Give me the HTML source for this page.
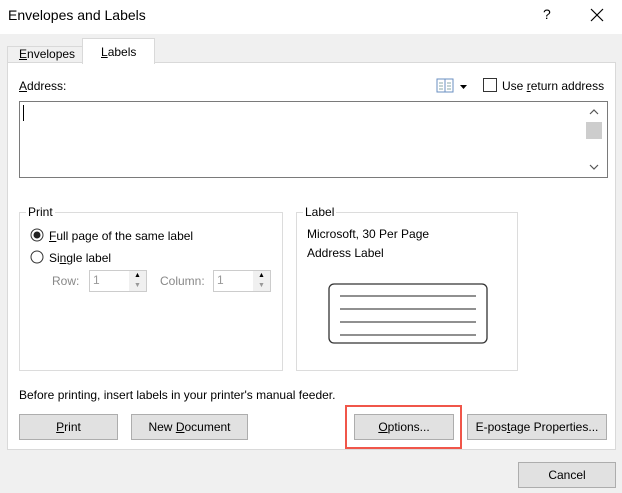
<!DOCTYPE html>
<html><head><style>
*{box-sizing:border-box;margin:0;padding:0}
body{width:622px;height:493px;background:#f0f0f0;font-family:"Liberation Sans",sans-serif;font-size:12px;color:#000;position:relative;overflow:hidden}
.a{position:absolute}
.btn{position:absolute;background:#e1e1e1;border:1px solid #adadad;text-align:center;line-height:24px;font-size:12px}
u{text-decoration:underline}
.grp{position:absolute;border:1px solid #dcdcdc}
.grp .t{position:absolute;top:-8px;left:6px;background:#fff;padding:0 2px}
</style></head><body>
<div class="a" style="left:0;top:0;width:622px;height:34px;background:#fff"></div>
<div class="a" style="left:8px;top:7px;font-size:14px">Envelopes and Labels</div>
<div class="a" style="left:543px;top:6px;font-size:14px">?</div>
<svg class="a" style="left:590px;top:8px" width="14" height="14"><path d="M1 1L13 13M13 1L1 13" stroke="#000" stroke-width="1.2"/></svg>
<div class="a" style="left:7px;top:46px;width:76px;height:17px;border:1px solid #d9d9d9;border-bottom:none;background:#f0f0f0"></div>
<div class="a" style="left:19px;top:47px"><u>E</u>nvelopes</div>
<div class="a" style="left:82px;top:38px;width:73px;height:26px;border:1px solid #d9d9d9;border-bottom:none;background:#fff;z-index:2"></div>
<div class="a" style="left:101px;top:45px;z-index:3"><u>L</u>abels</div>
<div class="a" style="left:7px;top:62px;width:609px;height:388px;background:#fff;border:1px solid #d9d9d9"></div>
<div class="a" style="left:19px;top:79px"><u>A</u>ddress:</div>
<svg class="a" style="left:436px;top:78px" width="36" height="16"><rect x="1" y="1" width="16" height="13" fill="#fff" stroke="#6a8fc2"/><line x1="9" y1="1" x2="9" y2="14" stroke="#6a8fc2"/><path d="M3 5h4M3 8h4M3 11h4M11 5h4M11 8h4M11 11h4" stroke="#8aa"/><path d="M24 7h7l-3.5 4z" fill="#000"/></svg>
<div class="a" style="left:483px;top:78px;width:14px;height:14px;border:1px solid #333;background:#fff"></div>
<div class="a" style="left:502px;top:79px">Use <u>r</u>eturn address</div>
<div class="a" style="left:19px;top:101px;width:589px;height:77px;border:1px solid #7a7a7a;background:#fff"></div>
<div class="a" style="left:23px;top:105px;width:1px;height:16px;background:#000"></div>
<div class="a" style="left:586px;top:122px;width:16px;height:17px;background:#cdcdcd"></div>
<svg class="a" style="left:589px;top:129px;top:129px" width="1" height="1"></svg>
<svg class="a" style="left:589px;top:130px" width="1" height="1"></svg>
<svg class="a" style="left:589px;top:129px" width="1" height="1"></svg>
<svg class="a" style="left:589px;top:129px" width="1" height="1"></svg>
<svg class="a" style="left:589px;top:129px" width="1" height="1"></svg>
<svg class="a" style="left:589px;top:108px" width="10" height="8"><path d="M1 6L5 2L9 6" fill="none" stroke="#555" stroke-width="1.2"/></svg>
<svg class="a" style="left:589px;top:163px" width="10" height="8"><path d="M1 2L5 6L9 2" fill="none" stroke="#555" stroke-width="1.2"/></svg>
<div class="grp" style="left:19px;top:212px;width:264px;height:159px"><span class="t">Print</span></div>
<svg class="a" style="left:30px;top:228px" width="14" height="14"><circle cx="7" cy="7" r="6" fill="#fff" stroke="#333"/><circle cx="7" cy="7" r="3.5" fill="#222"/></svg>
<div class="a" style="left:49px;top:229px"><u>F</u>ull page of the same label</div>
<svg class="a" style="left:30px;top:250px" width="14" height="14"><circle cx="7" cy="7" r="6" fill="#fff" stroke="#333"/></svg>
<div class="a" style="left:49px;top:251px">Si<u>n</u>gle label</div>
<div class="a" style="left:52px;top:274px;color:#888">Row:</div>
<div class="a" style="left:89px;top:270px;width:58px;height:22px;border:1px solid #ccc;color:#999;padding:2px 3px">1</div>
<div class="a" style="left:129px;top:271px;width:17px;height:20px;background:#f0f0f0;font-size:7px;text-align:center;line-height:10px">▲<br><span style="color:#999">▼</span></div>
<div class="a" style="left:160px;top:274px;color:#888">Column:</div>
<div class="a" style="left:213px;top:270px;width:58px;height:22px;border:1px solid #ccc;color:#999;padding:2px 3px">1</div>
<div class="a" style="left:253px;top:271px;width:17px;height:20px;background:#f0f0f0;font-size:7px;text-align:center;line-height:10px">▲<br><span style="color:#999">▼</span></div>
<div class="grp" style="left:296px;top:212px;width:222px;height:159px"><span class="t">Label</span></div>
<div class="a" style="left:307px;top:227px">Microsoft, 30 Per Page</div>
<div class="a" style="left:307px;top:246px">Address Label</div>
<svg class="a" style="left:328px;top:283px" width="162" height="62"><rect x="1" y="1" width="158" height="59" rx="5" fill="#fff" stroke="#333" stroke-width="1.3"/><path d="M12 13h136M12 26h136M12 39h136M12 52h136" stroke="#222"/></svg>
<div class="a" style="left:19px;top:388px">Before printing, insert labels in your printer's manual feeder.</div>
<div class="btn" style="left:19px;top:414px;width:99px;height:26px"><u>P</u>rint</div>
<div class="btn" style="left:131px;top:414px;width:117px;height:26px">New <u>D</u>ocument</div>
<div class="a" style="left:345px;top:405px;width:117px;height:44px;border:2px solid #f0564a"></div>
<div class="btn" style="left:354px;top:414px;width:100px;height:26px"><u>O</u>ptions...</div>
<div class="btn" style="left:467px;top:414px;width:140px;height:26px">E-pos<u>t</u>age Properties...</div>
<div class="btn" style="left:518px;top:462px;width:98px;height:26px">Cancel</div>
</body></html>
